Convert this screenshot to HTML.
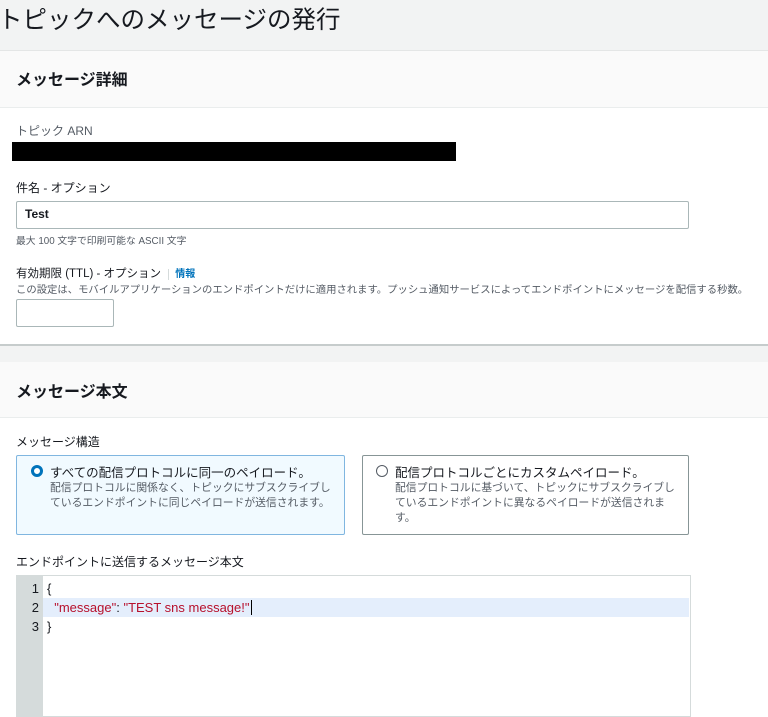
<!DOCTYPE html>
<html><head><meta charset="utf-8"><style>
body{margin:0;width:768px;height:703px;overflow:hidden;background:#fff;font-family:"Liberation Sans","Noto Sans CJK JP",sans-serif;color:#16191f;position:relative}
.a{position:absolute;white-space:nowrap}
</style></head><body>
<div class="a" style="left:0;top:0;width:768px;height:50px;background:#f2f3f3"></div>
<div class="a" style="left:-2px;top:1px;font-size:24.5px;color:#16191f">トピックへのメッセージの発行</div>
<div class="a" style="left:0;top:50px;width:768px;height:56px;background:#fafafa;border-top:1px solid #e4e6e6;border-bottom:1px solid #eaeded"></div>
<div class="a" style="left:16px;top:66px;font-size:16px;font-weight:bold">メッセージ詳細</div>
<div class="a" style="left:16px;top:122px;font-size:12px;color:#545b64">トピック ARN</div>
<div class="a" style="left:12px;top:142px;width:444px;height:19px;background:#000"></div>
<div class="a" style="left:16px;top:179px;font-size:12px">件名 - オプション</div>
<div class="a" style="left:16px;top:201px;width:671px;height:26px;border:1px solid #aab7b8;border-radius:2px"></div>
<div class="a" style="left:25px;top:207px;font-size:12px;font-weight:bold">Test</div>
<div class="a" style="left:16px;top:233px;font-size:9.8px;color:#545b64">最大 100 文字で印刷可能な ASCII 文字</div>
<div class="a" style="left:16px;top:265px;font-size:11.5px">有効期限 (TTL) - オプション <span style="border-left:1px solid #d5dbdb;margin-left:4px;padding-left:6px;color:#0073bb;font-weight:bold;font-size:10px">情報</span></div>
<div class="a" style="left:16px;top:281px;font-size:10.35px;color:#545b64">この設定は、モバイルアプリケーションのエンドポイントだけに適用されます。プッシュ通知サービスによってエンドポイントにメッセージを配信する秒数。</div>
<div class="a" style="left:16px;top:299px;width:96px;height:26px;border:1px solid #aab7b8;border-radius:2px"></div>
<div class="a" style="left:0;top:344px;width:768px;height:18px;background:#f2f3f3;border-top:2px solid #c6cccc"></div>
<div class="a" style="left:0;top:362px;width:768px;height:55px;background:#fafafa;border-bottom:1px solid #eaeded"></div>
<div class="a" style="left:16px;top:378px;font-size:16px;font-weight:bold">メッセージ本文</div>
<div class="a" style="left:16px;top:433px;font-size:12px">メッセージ構造</div>
<div class="a" style="left:16px;top:455px;width:327px;height:78px;border:1px solid #80b6e0;background:#f1faff;border-radius:2px"></div>
<div class="a" style="left:31px;top:465px;width:6px;height:6px;border:3px solid #0073bb;border-radius:50%;background:#fff"></div>
<div class="a" style="left:50px;top:462px;font-size:12.5px">すべての配信プロトコルに同一のペイロード。</div>
<div class="a" style="left:50px;top:481px;font-size:10.8px;line-height:15px;color:#545b64">配信プロトコルに関係なく、トピックにサブスクライブし<br>ているエンドポイントに同じペイロードが送信されます。</div>
<div class="a" style="left:362px;top:455px;width:325px;height:78px;border:1px solid #879596;border-radius:2px"></div>
<div class="a" style="left:376px;top:465px;width:10px;height:10px;border:1px solid #545b64;border-radius:50%"></div>
<div class="a" style="left:395px;top:462px;font-size:12.5px">配信プロトコルごとにカスタムペイロード。</div>
<div class="a" style="left:395px;top:481px;font-size:10.8px;line-height:15px;color:#545b64">配信プロトコルに基づいて、トピックにサブスクライブし<br>ているエンドポイントに異なるペイロードが送信されま<br>す。</div>
<div class="a" style="left:16px;top:553px;font-size:12px">エンドポイントに送信するメッセージ本文</div>
<div class="a" style="left:16px;top:575px;width:673px;height:140px;border:1px solid #d5dbdb;background:#fff"></div>
<div class="a" style="left:17px;top:576px;width:26px;height:140px;background:#d5dbdb"></div>
<div class="a" style="left:43px;top:598px;width:646px;height:19px;background:#e4eefc"></div>
<div class="a" style="left:17px;top:579px;width:22px;text-align:right;font-size:13px;line-height:19px">1<br>2<br>3</div>
<div class="a" style="left:47px;top:579px;font-size:13px;line-height:19px">{<br>&nbsp;&nbsp;<span style="color:#b7102c">"message"</span>: <span style="color:#b7102c">"TEST sns message!"</span><span style="border-left:1px solid #000;margin-left:1px"></span><br>}</div>
</body></html>
